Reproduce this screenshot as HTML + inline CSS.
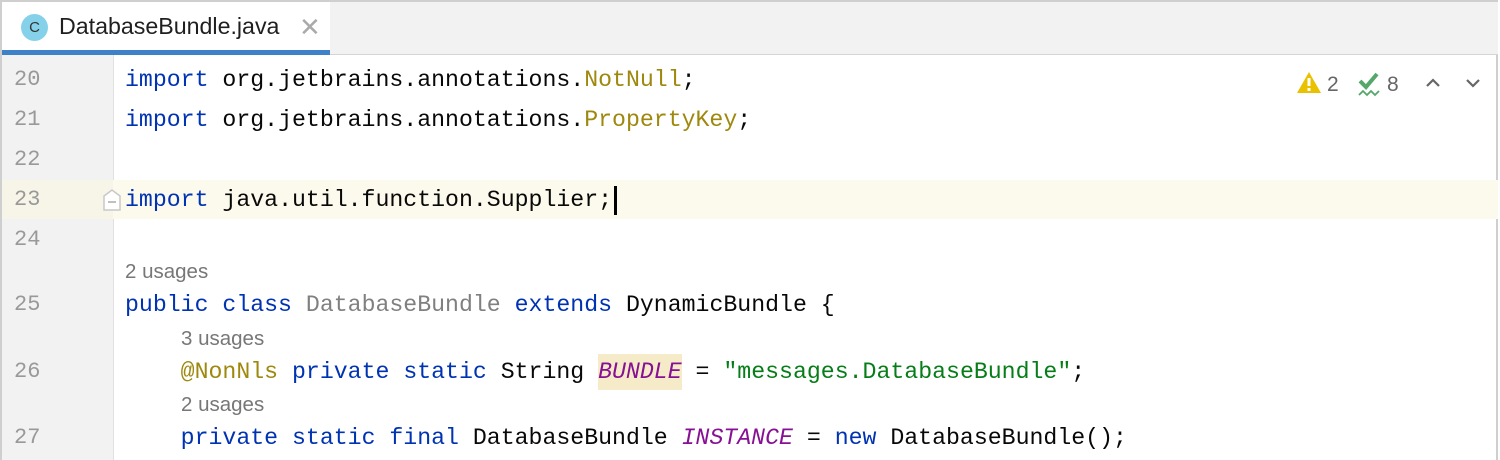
<!DOCTYPE html>
<html><head><style>
body{margin:0;width:1500px;height:460px;overflow:hidden;background:#fff;position:relative;font-family:"Liberation Sans",sans-serif}
.frame{position:absolute;left:0;top:0;width:1498px;height:460px;border:2px solid #cfcfcf;border-bottom:none;box-sizing:border-box}
.tabbar{position:absolute;left:2px;top:2px;width:1496px;height:53px;background:#f2f2f2;border-bottom:1px solid #d5d5d5;box-sizing:border-box}
.tab{position:absolute;left:2px;top:2px;width:328px;height:53px;background:#fff}
.tab .ul{position:absolute;left:0;bottom:0;width:328px;height:5px;background:#3f81c9}
.icon{position:absolute;left:19px;top:12px;width:27px;height:27px;border-radius:50%;background:#86d1ea;color:#333;font-size:15px;text-align:center;line-height:27px}
.tabt{position:absolute;left:57px;top:11px;font-size:23.2px;color:#1f1f1f}
.x{position:absolute;left:297px;top:10px;font-size:26px;color:#aaa}
.gutter{position:absolute;left:2px;top:55px;width:111px;height:405px;background:#f2f2f2;border-right:1px solid #e0e0e0}
.hl{position:absolute;left:2px;top:180px;width:1496px;height:39px;background:#fcfaed}
.hl2{position:absolute;left:2px;top:180px;width:111px;height:39px;background:#f7f5e8}
.ln{position:absolute;left:14px;font-family:"Liberation Mono",monospace;font-size:22px;color:#999}
.c{position:absolute;left:125px;font-family:"Liberation Mono",monospace;font-size:23.2px;color:#080808;white-space:pre;line-height:30px}
.k{color:#0033b3}.a{color:#9e880d}.g{color:#808080}.s{color:#067d17}.p{color:#871094;font-style:italic}
.u{position:absolute;left:125px;font-size:20.5px;color:#777}
.bh{background:#f6ebc8;padding:5px 0}
</style></head><body>
<div class="frame"></div>
<div class="tabbar"></div>
<div class="tab"><div class="icon">C</div><div class="tabt">DatabaseBundle.java</div><div class="x">✕</div><div class="ul"></div></div>
<div class="gutter"></div>
<div class="hl"></div><div class="hl2"></div>
<div class="ln" style="top:67px">20</div>
<div class="ln" style="top:107px">21</div>
<div class="ln" style="top:147px">22</div>
<div class="ln" style="top:187px">23</div>
<div class="ln" style="top:227px">24</div>
<div class="ln" style="top:292px">25</div>
<div class="ln" style="top:359px">26</div>
<div class="ln" style="top:425px">27</div>
<svg style="position:absolute;left:103px;top:189px" width="18" height="22"><path d="M1 7 L9 1 L17 7 V21 H1 Z" fill="#fff" stroke="#c8c8c8" stroke-width="1.5"/><path d="M5 13 H13" stroke="#aaa" stroke-width="1.5"/></svg>
<div class="c" style="top:65px"><span class="k">import</span> org.jetbrains.annotations.<span class="a">NotNull</span>;</div>
<div class="c" style="top:105px"><span class="k">import</span> org.jetbrains.annotations.<span class="a">PropertyKey</span>;</div>
<div class="c" style="top:185px"><span class="k">import</span> java.util.function.Supplier;</div>
<div style="position:absolute;left:614px;top:186px;width:3px;height:29px;background:#000"></div>
<div class="u" style="top:260px">2 usages</div>
<div class="c" style="top:290px"><span class="k">public class</span> <span class="g">DatabaseBundle</span> <span class="k">extends</span> DynamicBundle {</div>
<div class="u" style="top:327px;left:181px">3 usages</div>
<div class="c" style="top:357px">    <span class="a">@NonNls</span> <span class="k">private static</span> String <span class="p bh">BUNDLE</span> = <span class="s">"messages.DatabaseBundle"</span>;</div>
<div class="u" style="top:393px;left:181px">2 usages</div>
<div class="c" style="top:423px">    <span class="k">private static final</span> DatabaseBundle <span class="p">INSTANCE</span> = <span class="k">new</span> DatabaseBundle();</div>
<svg style="position:absolute;left:1297px;top:70px" width="200" height="28">
<path d="M12 2 L24 23 H0 Z" fill="#e8c200"/><rect x="10.5" y="8" width="3" height="8" fill="#fff"/><rect x="10.5" y="18" width="3" height="3" fill="#fff"/>
<text x="30" y="21" font-family="Liberation Sans" font-size="21" fill="#666">2</text>
<path d="M63 11 L69 17 L80 4" stroke="#55a76a" stroke-width="4" fill="none"/><path d="M62 25 L66 21 L70 25 L74 21 L78 25 L82 21" stroke="#55a76a" stroke-width="1.8" fill="none"/>
<text x="90" y="21" font-family="Liberation Sans" font-size="21" fill="#666">8</text>
<path d="M130 16 L136 10 L142 16" stroke="#666" stroke-width="2.2" fill="none"/>
<path d="M170 10 L176 16 L182 10" stroke="#666" stroke-width="2.2" fill="none"/>
</svg>
</body></html>
